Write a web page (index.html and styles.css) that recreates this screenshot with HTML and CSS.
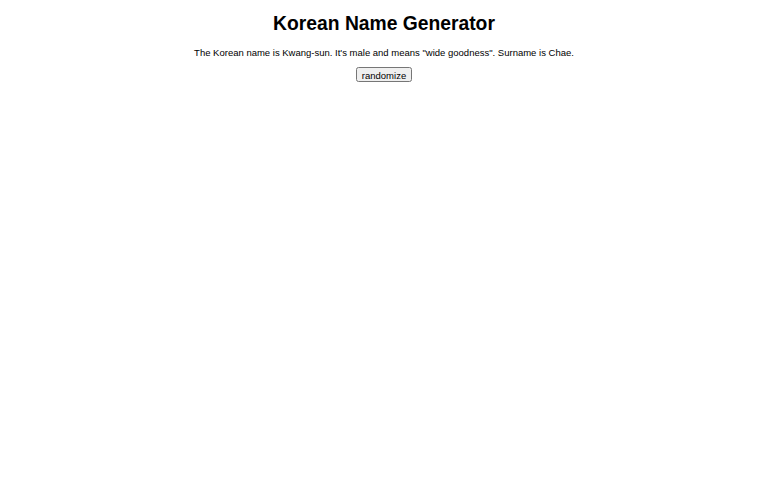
FILE: index.html
```html
<!DOCTYPE html>
<html lang="en">
<head>
<meta charset="utf-8">
<title>Korean Name Generator</title>
<link rel="stylesheet" href="styles.css">
</head>
<body>
<main class="generator">
  <h1 class="title">Korean Name Generator</h1>
  <p class="result">The Korean name is Kwang-sun. It's male and means "wide goodness". Surname is Chae.</p>
  <button class="randomize" type="button">randomize</button>
</main>
</body>
</html>
```
FILE: styles.css
```css
body {
  margin: 8px;
  background: #fff;
  color: #000;
  font-family: "Liberation Sans", Arial, sans-serif;
}

.generator {
  display: flex;
  flex-direction: column;
  align-items: center;
  text-align: center;
}

.title {
  font-size: 19.3px;
  font-weight: bold;
  margin: 6px 0 0;
  line-height: 20px;
}

.result {
  font-size: 9.5px;
  margin: 13px 0 0;
  line-height: 12px;
}

.randomize {
  margin-top: 8px;
  font-family: "Liberation Sans", Arial, sans-serif;
  font-size: 9.5px;
  padding: 1px 4px;
  height: 15px;
  line-height: 11px;
}
```
